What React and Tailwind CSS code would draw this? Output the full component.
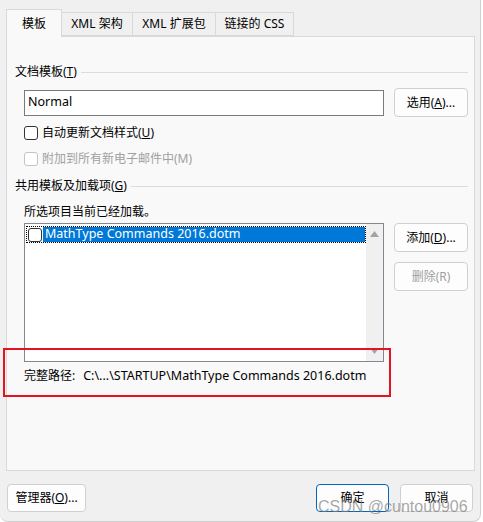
import { useState } from "react";

const FONT = { fontFamily: '"Noto Sans", "Noto Sans CJK SC", sans-serif' };

function Tab({ label, width }) {
  return (
    <div
      className="flex h-[24px] items-center justify-center border border-l-0 border-[#d9d9d9] bg-[#f0f0f0]"
      style={{ width }}
    >
      {label}
    </div>
  );
}

function GroupLabel({ children, className = "" }) {
  return (
    <div className={`flex h-[16px] items-center gap-[4px] ${className}`}>
      <span className="whitespace-nowrap">{children}</span>
      <div className="h-px flex-1 bg-[#dcdcdc]" />
    </div>
  );
}

function Button({ children, disabled, primary, className = "" }) {
  return (
    <button
      className={`flex items-center justify-center rounded-[4px] border bg-[#fdfdfd] ${
        primary ? "border-[#0067c0]" : "border-[#d0d0d0]"
      } ${disabled ? "text-[#a0a0a0]" : "text-black"} ${className}`}
    >
      {children}
    </button>
  );
}

function Checkbox({ checked, disabled, onChange }) {
  return (
    <span
      onClick={disabled ? undefined : onChange}
      className={`block size-[14px] shrink-0 rounded-[3px] border bg-white ${
        disabled ? "border-[#c4c4c4]" : "border-[#333]"
      }`}
    >
      {checked && (
        <svg viewBox="0 0 14 14" className="size-full">
          <path d="M3 7l3 3 5-6" fill="none" stroke="#000" strokeWidth="1.4" />
        </svg>
      )}
    </span>
  );
}

export default function App() {
  const [autoUpdate, setAutoUpdate] = useState(false);
  const [mathType, setMathType] = useState(false);

  return (
    <div className="h-[522px] w-[483px] bg-white">
      <div
        className="relative h-[522px] w-[481px] overflow-hidden rounded-b-[8px] border-r border-b border-[#cfcfcf] bg-[#f0f0f0] text-[12px] text-black"
        style={FONT}
      >
        <div className="flex items-end pl-[6px] pt-[9px]">
          <div className="relative z-10 -mb-px flex h-[28px] w-[56px] items-center justify-center border border-b-0 border-[#d9d9d9] bg-[#f9f9f9]">
            模板
          </div>
          <Tab label="XML 架构" width={71} />
          <Tab label="XML 扩展包" width={83} />
          <Tab label="链接的 CSS" width={78} />
        </div>

        <div className="mx-[6px] flex h-[435px] w-[469px] flex-col border border-[#d9d9d9] bg-[#f9f9f9] pl-[8px] pr-[6px]">
          <GroupLabel className="mt-[27px]">
            文档模板(<span className="underline">T</span>)
          </GroupLabel>

          <div className="ml-[9px] mt-[8px] flex h-[29px] items-center justify-between">
            <div className="flex h-[26px] w-[360px] items-center border border-[#7a7a7a] bg-white pl-[3px] text-[12.5px]">
              Normal
            </div>
            <Button className="h-[29px] w-[74px]">
              选用(<span className="underline">A</span>)...
            </Button>
          </div>

          <label className="ml-[9px] mt-[8px] flex h-[16px] items-center gap-[4px]">
            <Checkbox checked={autoUpdate} onChange={() => setAutoUpdate(!autoUpdate)} />
            <span>
              自动更新文档样式(<span className="underline">U</span>)
            </span>
          </label>

          <label className="ml-[9px] mt-[10px] flex h-[16px] items-center gap-[4px] text-[#a0a0a0]">
            <Checkbox disabled />
            <span>附加到所有新电子邮件中(M)</span>
          </label>

          <GroupLabel className="mt-[11px]">
            共用模板及加载项(<span className="underline">G</span>)
          </GroupLabel>

          <div className="ml-[9px] mt-[10px] h-[16px] leading-[16px]">所选项目当前已经加载。</div>

          <div className="ml-[9px] mt-[3px] flex justify-between">
            <div className="flex h-[139px] w-[360px] border border-[#828790] bg-white">
              <div className="flex-1 pl-px pt-[2px]">
                <div className="flex h-[17px] items-center border border-dotted border-black">
                  <div className="flex h-full w-[16px] items-center justify-center">
                    <Checkbox checked={mathType} onChange={() => setMathType(!mathType)} />
                  </div>
                  <div className="flex h-full flex-1 items-center bg-[#0078d7] pl-[2px] text-[12.5px] text-white">
                    MathType Commands 2016.dotm
                  </div>
                </div>
              </div>
              <div className="flex w-[17px] flex-col items-center justify-between bg-[#f0f0f0] py-[7px]">
                <svg viewBox="0 0 9 6" className="h-[6px] w-[9px]">
                  <path d="M0 6L4.5 0L9 6Z" fill="#a3a3a3" />
                </svg>
                <svg viewBox="0 0 9 6" className="h-[6px] w-[9px]">
                  <path d="M0 0L4.5 6L9 0Z" fill="#a3a3a3" />
                </svg>
              </div>
            </div>
            <div className="flex flex-col">
              <Button className="h-[29px] w-[74px]">
                添加(<span className="underline">D</span>)...
              </Button>
              <Button disabled className="mt-[10px] h-[29px] w-[74px]">
                删除(R)
              </Button>
            </div>
          </div>

          <div className="ml-[9px] mt-[6px] flex h-[16px] items-center gap-[8px]">
            <span>完整路径:</span>
            <span className="text-[12.5px]">C:\...\STARTUP\MathType Commands 2016.dotm</span>
          </div>
        </div>

        <div className="mt-[13px] flex items-center px-[7px]">
          <Button className="h-[28px] w-[79px]">
            管理器(<span className="underline">O</span>)...
          </Button>
          <div className="flex-1" />
          <Button primary className="h-[28px] w-[73px]">
            确定
          </Button>
          <Button className="ml-[11px] h-[28px] w-[73px]">取消</Button>
        </div>

        <div className="pointer-events-none absolute left-[3px] top-[348px] h-[49px] w-[388px] border-2 border-[#e3141f]" />

        <div
          className="pointer-events-none absolute left-[318px] top-[495px] text-[16px] text-[#7f7f7f]/70"
          style={{ fontFamily: '"Liberation Sans", Arial, sans-serif' }}
        >
          CSDN @cuntou0906
        </div>
      </div>
    </div>
  );
}
